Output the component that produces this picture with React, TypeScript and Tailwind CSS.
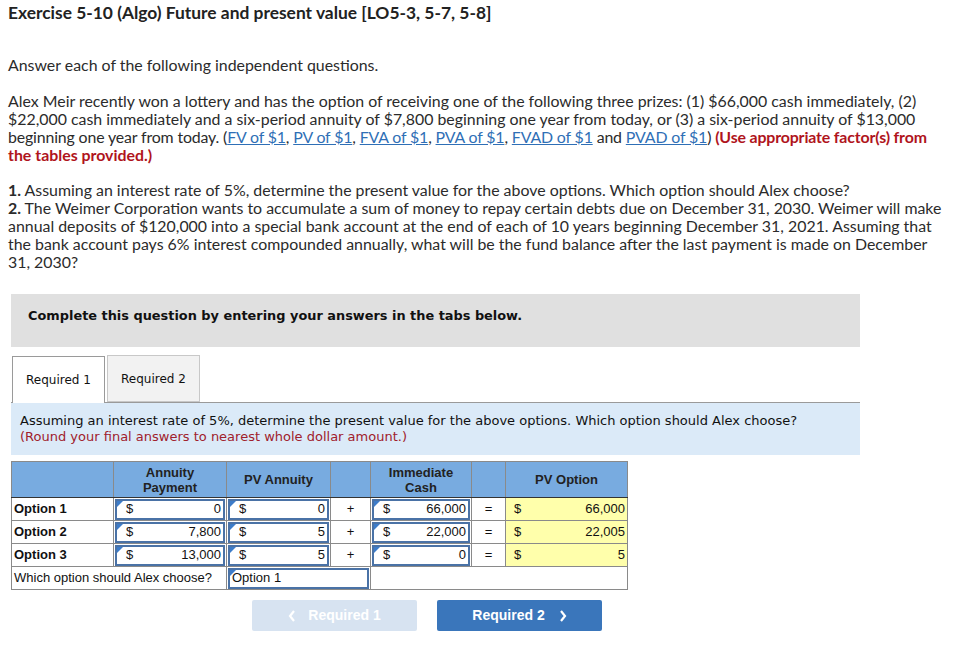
import React from "react";

const Tri = () => (
  <span className="absolute left-0 top-0 w-0 h-0 border-t-[6px] border-r-[6px] border-t-[#3d7cc9] border-r-transparent" />
);

function Inp({ dollar = true, value, text }: { dollar?: boolean; value?: string; text?: string }) {
  return (
    <div className="relative h-[21px] mx-[1px] border-2 border-[#4a72a6] bg-white flex items-center px-[6px] text-[13px]">
      <Tri />
      {text ? (
        <span className="-ml-[4px]">{text}</span>
      ) : (
        <>
          {dollar && <span className="pl-[3px]">$</span>}
          <span className="ml-auto -mr-[4px]">{value}</span>
        </>
      )}
    </div>
  );
}

const td = "border border-[#8a8a8a] p-0 h-[23px]";

export default function App() {
  const link = "text-[#2f6fb6] underline";
  return (
    <div className="w-[962px] h-[645px] bg-white text-[#2b2b2b] overflow-hidden" style={{ fontFamily: "Lato, 'Open Sans', sans-serif" }}>
      <div className="pl-[8px] pt-[1px] text-[17.4px] font-bold text-[#222] leading-[24px]">
        Exercise 5-10 (Algo) Future and present value [LO5-3, 5-7, 5-8]
      </div>
      <div className="pl-[8px] text-[15.9px] leading-[18px]">
        <p className="mt-[31px]">Answer each of the following independent questions.</p>
        <p className="mt-[18px] whitespace-nowrap">
          Alex Meir recently won a lottery and has the option of receiving one of the following three prizes: (1) $66,000 cash immediately, (2)
          <br />
          $22,000 cash immediately and a six-period annuity of $7,800 beginning one year from today, or (3) a six-period annuity of $13,000
          <br />
          <span className="tracking-[-0.15px]">
            beginning one year from today. (<span className={link}>FV of $1</span>, <span className={link}>PV of $1</span>,{" "}
            <span className={link}>FVA of $1</span>, <span className={link}>PVA of $1</span>, <span className={link}>FVAD of $1</span> and{" "}
            <span className={link}>PVAD of $1</span>) <b className="text-[#b0141c]">(Use appropriate factor(s) from</b>
          </span>
          <br />
          <b className="text-[#b0141c]">the tables provided.)</b>
        </p>
        <p className="mt-[17px] whitespace-nowrap">
          <b>1.</b> Assuming an interest rate of 5%, determine the present value for the above options. Which option should Alex choose?
          <br />
          <b>2.</b> The Weimer Corporation wants to accumulate a sum of money to repay certain debts due on December 31, 2030. Weimer will make
          <br />
          annual deposits of $120,000 into a special bank account at the end of each of 10 years beginning December 31, 2021. Assuming that
          <br />
          the bank account pays 6% interest compounded annually, what will be the fund balance after the last payment is made on December
          <br />
          31, 2030?
        </p>
      </div>

      <div className="ml-[11px] w-[849px] mt-[23px]" style={{ fontFamily: "'DejaVu Sans', Verdana, sans-serif" }}>
        <div className="h-[53px] bg-[#e0e0e0] pt-[14px] pl-[17px] text-[12.9px] leading-[16px] font-bold text-[#111]">
          Complete this question by entering your answers in the tabs below.
        </div>
        <div className="mt-[8px] flex items-end h-[47px] text-[12px] text-[#111]">
          <div className="w-[93px] h-[47px] border border-b-0 border-[#9a9a9a] bg-white flex items-center justify-center relative top-[1px] ml-[1px]">
            Required 1
          </div>
          <div className="w-[93px] h-[47px] border border-[#c8c8c8] bg-[#f2f2f2] flex items-center justify-center ml-[2px]">
            Required 2
          </div>
        </div>
        <div className="border-t border-[#9a9a9a] bg-[#dbeaf8] h-[53px] pl-[9px] pt-[10px] text-[13px] leading-[16px] text-[#111]">
          Assuming an interest rate of 5%, determine the present value for the above options. Which option should Alex choose?
          <br />
          <span className="text-[#a0212c]">(Round your final answers to nearest whole dollar amount.)</span>
        </div>
      </div>

      <div className="ml-[11px] mt-[6px]" style={{ fontFamily: "'Liberation Sans', Arial, sans-serif" }}>
        <table className="border-collapse text-[13px] text-[#111]" style={{ tableLayout: "fixed" }}>
          <colgroup>
            <col className="w-[102px]" />
            <col className="w-[113px]" />
            <col className="w-[104px]" />
            <col className="w-[40px]" />
            <col className="w-[101px]" />
            <col className="w-[34px]" />
            <col className="w-[122px]" />
          </colgroup>
          <thead>
            <tr className="bg-[#78abe0] h-[36px] font-bold text-[#222] text-center leading-[15px]">
              <th className="border border-[#8a8a8a] border-b-[#333]"></th>
              <th className="border border-[#8a8a8a] border-b-[#333]">Annuity<br />Payment</th>
              <th className="border border-[#8a8a8a] border-b-[#333]">PV Annuity</th>
              <th className="border border-[#8a8a8a] border-b-[#333]"></th>
              <th className="border border-[#8a8a8a] border-b-[#333]">Immediate<br />Cash</th>
              <th className="border border-[#8a8a8a] border-b-[#333]"></th>
              <th className="border border-[#8a8a8a] border-b-[#333]">PV Option</th>
            </tr>
          </thead>
          <tbody>
            {[
              ["Option 1", "0", "0", "66,000", "66,000"],
              ["Option 2", "7,800", "5", "22,000", "22,005"],
              ["Option 3", "13,000", "5", "0", "5"],
            ].map((r) => (
              <tr key={r[0]}>
                <td className={`${td} font-bold pl-[2px]`}>{r[0]}</td>
                <td className={td}><Inp value={r[1]} /></td>
                <td className={td}><Inp value={r[2]} /></td>
                <td className={`${td} text-center`}>+</td>
                <td className={td}><Inp value={r[3]} /></td>
                <td className={`${td} text-center`}>=</td>
                <td className={`${td} bg-[#ffffab]`}>
                  <div className="flex px-[6px]">
                    <span className="pl-[2px]">$</span>
                    <span className="ml-auto -mr-[4px]">{r[4]}</span>
                  </div>
                </td>
              </tr>
            ))}
            <tr>
              <td colSpan={2} className={`${td} pl-[2px]`}>Which option should Alex choose?</td>
              <td colSpan={2} className={td}><Inp text="Option 1" /></td>
              <td colSpan={3} className={td}></td>
            </tr>
          </tbody>
        </table>
      </div>

      <div className="flex gap-[20px] ml-[252px] mt-[10px]" style={{ fontFamily: "'Liberation Sans', Arial, sans-serif" }}>
        <div className="w-[165px] h-[31px] rounded-[2px] bg-[#d7e3f1] text-white font-bold text-[14px] flex items-center justify-center gap-[12px]">
          <svg width="8" height="12" viewBox="0 0 8 12"><path d="M6 1 L2 6 L6 11" stroke="white" strokeWidth="2.2" fill="none" /></svg>
          Required 1
        </div>
        <div className="w-[165px] h-[31px] rounded-[2px] bg-[#3a76bb] text-white font-bold text-[14px] flex items-center justify-center gap-[14px]">
          Required 2
          <svg width="8" height="12" viewBox="0 0 8 12"><path d="M2 1 L6 6 L2 11" stroke="white" strokeWidth="2.2" fill="none" /></svg>
        </div>
      </div>
    </div>
  );
}
